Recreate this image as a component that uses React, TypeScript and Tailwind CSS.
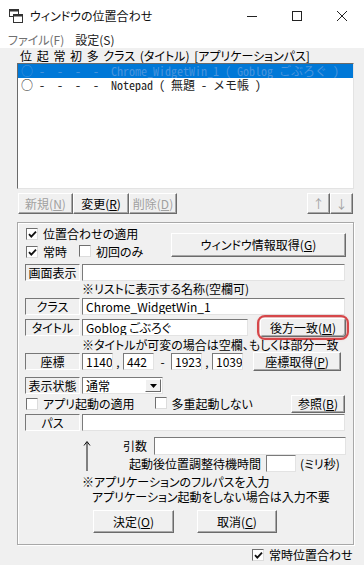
import type { ReactNode } from "react";

function Check({ checked }: { checked?: boolean }) {
  return (
    <span className="inline-flex w-[12px] h-[12px] shrink-0 items-center justify-center bg-white border border-t-[#6f6f6f] border-l-[#6f6f6f] border-b-[#dcdcdc] border-r-[#dcdcdc]">
      {checked && (
        <svg width="9" height="9" viewBox="0 0 9 9">
          <path d="M1 4.2 L3.3 6.6 L8 1.6" fill="none" stroke="#111" strokeWidth="1.8" />
        </svg>
      )}
    </span>
  );
}

function Lbl({ children }: { children: ReactNode }) {
  return (
    <div className="w-[55px] h-[17px] shrink-0 flex items-center justify-center leading-none border border-t-[#777] border-l-[#777] border-b-white border-r-white">
      {children}
    </div>
  );
}

function Inp({ className, children }: { className: string; children?: ReactNode }) {
  return (
    <div
      className={
        "h-[17px] shrink-0 bg-white flex items-center pl-[3px] leading-none overflow-hidden whitespace-nowrap border border-t-[#7a7a7a] border-l-[#7a7a7a] border-b-[#e3e3e3] border-r-[#e3e3e3] " +
        className
      }
    >
      {children}
    </div>
  );
}

function Btn({
  className,
  children,
  disabled,
}: {
  className: string;
  children: ReactNode;
  disabled?: boolean;
}) {
  return (
    <div
      className={
        "shrink-0 flex items-center justify-center leading-none bg-[#f0f0f0] border border-t-white border-l-white border-b-[#6b6b6b] border-r-[#6b6b6b] shadow-[inset_-1px_-1px_0_#a8a8a8] " +
        (disabled ? "text-[#a0a0a0] " : "text-black ") +
        className
      }
    >
      {children}
    </div>
  );
}

export default function App() {
  return (
    <div className="w-[364px] h-[565px] overflow-hidden bg-[#f0f0f0] text-black text-[12px] font-['Noto_Sans_CJK_JP','Noto_Sans',sans-serif] [font-feature-settings:'palt'] flex flex-col">
      {/* title bar */}
      <div className="h-[32px] shrink-0 bg-white flex items-center">
        <svg className="ml-[9px]" width="14" height="14" viewBox="0 0 14 14">
          <rect x="0.5" y="0.5" width="9" height="7" fill="#fff" stroke="#333" />
          <rect x="0.5" y="0.5" width="9" height="2" fill="#333" />
          <rect x="4.5" y="5.5" width="9" height="8" fill="#fff" stroke="#333" />
          <rect x="4.5" y="5.5" width="9" height="2" fill="#333" />
        </svg>
        <span className="ml-[7px] text-[12px] text-[#111]">ウィンドウの位置合わせ</span>
        <div className="flex-1" />
        <div className="w-[45px] h-full flex items-center justify-center">
          <svg width="10" height="10" viewBox="0 0 10 10">
            <line x1="0" y1="5.5" x2="10" y2="5.5" stroke="#222" />
          </svg>
        </div>
        <div className="w-[45px] h-full flex items-center justify-center">
          <svg width="10" height="10" viewBox="0 0 10 10">
            <rect x="0.5" y="0.5" width="9" height="9" fill="none" stroke="#222" />
          </svg>
        </div>
        <div className="w-[45px] h-full flex items-center justify-center">
          <svg width="10" height="10" viewBox="0 0 10 10">
            <path d="M0 0 L10 10 M10 0 L0 10" stroke="#222" />
          </svg>
        </div>
      </div>

      {/* menu */}
      <div className="h-[16px] shrink-0 bg-white flex items-center leading-none">
        <span className="ml-[8px] text-[#707070]">ファイル(F)</span>
        <span className="ml-[11px] text-[#222]">設定(S)</span>
      </div>

      {/* list header */}
      <div className="h-[15px] shrink-0 pl-[20px] leading-[15px] whitespace-pre [word-spacing:2px]">
        位 起 常 初 多 クラス (タイトル) [アプリケーションパス]
      </div>

      {/* list */}
      <div className="ml-[17px] w-[337px] h-[126px] shrink-0 bg-white border border-t-[#6a6a6a] border-l-[#6a6a6a] border-b-[#e3e3e3] border-r-[#e3e3e3] font-['Noto_Sans_Mono_CJK_JP','Liberation_Mono',monospace] [font-feature-settings:normal]">
        <div className="h-[14px] bg-[#0078d7] text-[#4a94dc] leading-[13px] pl-[3px] whitespace-pre overflow-hidden">
          ○ -  -  -  -  Chrome_WidgetWin_1 ( Goblog ごぶろぐ )
        </div>
        <div className="h-[14px] leading-[13px] pl-[3px] whitespace-pre text-[#222] overflow-hidden">
          ○ -  -  -  -  Notepad ( 無題 - メモ帳 )
        </div>
      </div>

      {/* list buttons */}
      <div className="mt-[4px] ml-[18px] w-[335px] h-[21px] shrink-0 flex">
        <Btn className="w-[55px] h-[21px]" disabled>
          新規(<u>N</u>)
        </Btn>
        <Btn className="w-[56px] h-[21px]">
          変更(<u>R</u>)
        </Btn>
        <Btn className="w-[48px] h-[21px]" disabled>
          削除(<u>D</u>)
        </Btn>
        <div className="flex-1" />
        <Btn className="w-[23px] h-[21px]" disabled>
          ↑
        </Btn>
        <Btn className="w-[23px] h-[21px]" disabled>
          ↓
        </Btn>
      </div>

      {/* group box */}
      <div className="mt-[8px] ml-[17px] w-[337px] shrink-0 border border-[#a8a8a8] shadow-[inset_1px_1px_0_#fff,1px_1px_0_#fff] px-[7px] pt-[3px] pb-[11px]">
        <div className="flex">
          <div className="flex flex-col">
            <div className="h-[16px] flex items-center pl-[1px]">
              <Check checked />
              <span className="ml-[5px] leading-none">位置合わせの適用</span>
            </div>
            <div className="mt-[2px] h-[16px] flex items-center pl-[1px]">
              <Check checked />
              <span className="ml-[5px] leading-none">常時</span>
              <span className="ml-[12px]">
                <Check />
              </span>
              <span className="ml-[5px] leading-none">初回のみ</span>
            </div>
          </div>
          <div className="flex-1" />
          <Btn className="mt-[7px] w-[175px] h-[24px]">
            ウィンドウ情報取得(<u>G</u>)
          </Btn>
        </div>

        <div className="mt-[4px] flex gap-[2px]">
          <Lbl>画面表示</Lbl>
          <Inp className="w-[263px]" />
        </div>
        <div className="h-[16px] pl-[57px] leading-[16px]">※リストに表示する名称(空欄可)</div>
        <div className="mt-[1px] flex gap-[2px]">
          <Lbl>クラス</Lbl>
          <Inp className="w-[263px]">Chrome_WidgetWin_1</Inp>
        </div>

        <div className="mt-[4px] h-[17px] flex items-center gap-[2px]">
          <Lbl>タイトル</Lbl>
          <Inp className="w-[166px]">Goblog ごぶろぐ</Inp>
          <div className="ml-[10px] rounded-[5px] outline-2 outline-[#d6474a] outline-offset-1 shadow-[0_0_3px_2px_rgba(214,71,74,0.35)]">
            <Btn className="w-[86px] h-[19px] rounded-[3px]">
              後方一致(<u>M</u>)
            </Btn>
          </div>
        </div>
        <div className="mt-[1px] h-[15px] pl-[57px] leading-[15px] whitespace-nowrap">
          ※タイトルが可変の場合は空欄、もしくは部分一致
        </div>

        <div className="mt-[1px] h-[17px] flex items-center">
          <Lbl>座標</Lbl>
          <Inp className="ml-[2px] w-[31px]">1140</Inp>
          <span className="w-[10px] text-center">,</span>
          <Inp className="w-[31px]">442</Inp>
          <span className="w-[17px] text-center">-</span>
          <Inp className="w-[31px]">1923</Inp>
          <span className="w-[10px] text-center">,</span>
          <Inp className="w-[31px]">1039</Inp>
          <Btn className="ml-[10px] w-[88px] h-[19px]">
            座標取得(<u>P</u>)
          </Btn>
        </div>

        <div className="mt-[7px] h-[17px] flex items-center gap-[2px]">
          <Lbl>表示状態</Lbl>
          <div className="w-[81px] h-[17px] bg-white flex items-center border border-t-[#7a7a7a] border-l-[#7a7a7a] border-b-[#e3e3e3] border-r-[#e3e3e3]">
            <span className="pl-[3px] flex-1 leading-none">通常</span>
            <div className="w-[16px] h-[13px] mr-[1px] flex items-center justify-center bg-[#f0f0f0] border border-t-white border-l-white border-b-[#6b6b6b] border-r-[#6b6b6b]">
              <svg width="7" height="4" viewBox="0 0 7 4">
                <path d="M0 0 H7 L3.5 4 Z" fill="#000" />
              </svg>
            </div>
          </div>
        </div>

        <div className="mt-[1px] h-[18px] flex items-center pl-[1px]">
          <Check />
          <span className="ml-[5px] leading-none">アプリ起動の適用</span>
          <span className="ml-[20px]">
            <Check />
          </span>
          <span className="ml-[5px] leading-none">多重起動しない</span>
          <div className="flex-1" />
          <Btn className="mr-[1px] w-[54px] h-[18px]">
            参照(<u>B</u>)
          </Btn>
        </div>

        <div className="mt-[1px] flex gap-[2px]">
          <Lbl>パス</Lbl>
          <Inp className="w-[263px]" />
        </div>

        <div className="mt-[6px] flex">
          <div className="w-[67px] shrink-0 pl-[57px] pt-[4px]">
            <svg width="10" height="30" viewBox="0 0 10 30">
              <line x1="5" y1="1" x2="5" y2="30" stroke="#111" />
              <path d="M2 4.5 L5 0.5 L8 4.5" fill="none" stroke="#111" />
            </svg>
          </div>
          <div className="flex-1 flex flex-col">
            <div className="h-[18px] flex items-center justify-end">
              <span className="leading-none">引数</span>
              <Inp className="ml-[7px] w-[192px] h-[18px]" />
            </div>
            <div className="h-[17px] flex items-center">
              <span className="w-[174px] pr-[5px] text-right leading-none whitespace-nowrap">起動後位置調整待機時間</span>
              <Inp className="w-[30px]" />
              <span className="ml-[4px] leading-none">(ミリ秒)</span>
            </div>
          </div>
        </div>

        <div className="mt-[2px] h-[15px] pl-[57px] leading-[15px] whitespace-nowrap">
          ※アプリケーションのフルパスを入力
        </div>
        <div className="h-[15px] pl-[67px] leading-[15px] whitespace-nowrap">
          アプリケーション起動をしない場合は入力不要
        </div>

        <div className="mt-[6px] flex">
          <Btn className="ml-[68px] w-[81px] h-[23px]">
            決定(<u>O</u>)
          </Btn>
          <Btn className="ml-[23px] w-[80px] h-[23px]">
            取消(<u>C</u>)
          </Btn>
        </div>
      </div>

      {/* bottom */}
      <div className="mt-[3px] h-[14px] shrink-0 flex items-center pl-[252px]">
        <Check checked />
        <span className="ml-[5px] leading-none">常時位置合わせ</span>
      </div>
    </div>
  );
}
